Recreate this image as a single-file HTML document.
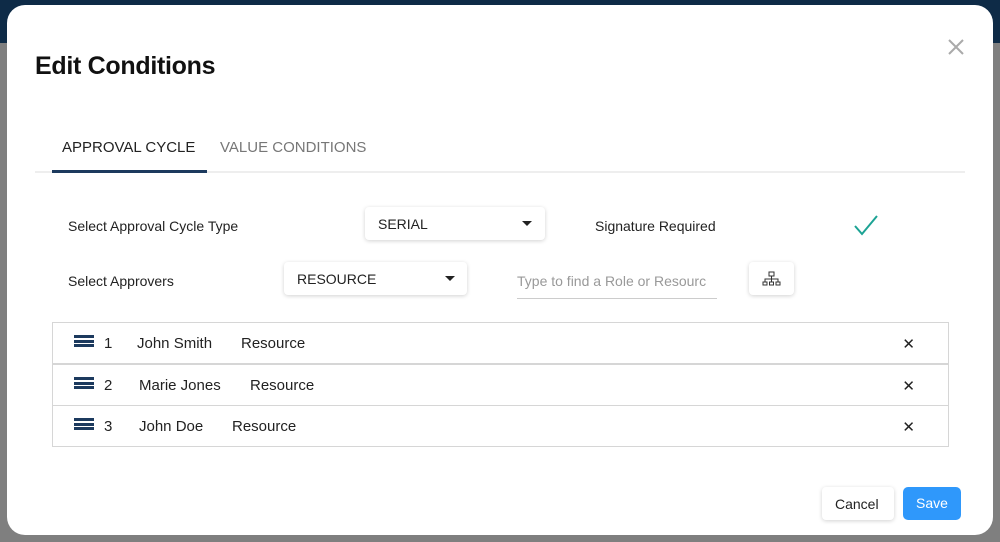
<!DOCTYPE html>
<html><head><style>
body{margin:0;width:1000px;height:542px;overflow:hidden;background:#7f7f7f;font-family:"Liberation Sans",sans-serif;position:relative}
.top{position:absolute;left:0;top:0;width:1000px;height:43px;background:#0e2b47}
.modal{position:absolute;left:7px;top:5px;width:986px;height:530px;background:#fff;border-radius:18px}
.a{position:absolute;white-space:nowrap}
h1{position:absolute;left:28px;top:47px;margin:0;font-size:25px;font-weight:bold;color:#111;letter-spacing:-0.3px}
.tab{font-size:15px}
.sel{position:absolute;background:#fff;border-radius:4px;box-shadow:0 1px 4px rgba(0,0,0,.18);font-size:14px;color:#222}
.sel span{position:absolute;left:13px;top:9px}
.caret{position:absolute;width:0;height:0;border-left:5px solid transparent;border-right:5px solid transparent;border-top:5px solid #222;top:14px}
.row{position:absolute;left:45px;width:895px;height:40px;border:1px solid #d6d6d6;font-size:15px;color:#222}
.row div{position:absolute;top:12px}
.ham{position:absolute;left:21px;top:14px;width:20px;height:12px}
.ham i{display:block;height:3px;background:#1c3a5e;margin-bottom:1.5px}
.x{right:33px}
</style></head><body>
<div class="top"></div>
<div class="modal">
<h1>Edit Conditions</h1>
<svg class="a" style="left:941px;top:34px" width="16" height="16" viewBox="0 0 16 16"><path d="M1 1L15 15M15 1L1 15" stroke="#aaa" stroke-width="2"/></svg>
<div class="a tab" style="left:55px;top:134px;color:#222">APPROVAL CYCLE</div>
<div class="a tab" style="left:213px;top:134px;color:#777">VALUE CONDITIONS</div>
<div class="a" style="left:28px;top:166px;width:930px;height:2px;background:#eee"></div>
<div class="a" style="left:45px;top:165px;width:155px;height:3px;background:#1c3a5e"></div>
<div class="a" style="left:61px;top:213px;font-size:14px;color:#222">Select Approval Cycle Type</div>
<div class="sel" style="left:358px;top:202px;width:180px;height:33px"><span>SERIAL</span><div class="caret" style="left:157px"></div></div>
<div class="a" style="left:588px;top:213px;font-size:14px;color:#222">Signature Required</div>
<svg class="a" style="left:846px;top:209px" width="26" height="22" viewBox="0 0 26 22"><path d="M2 12 L9 20 L24 2" fill="none" stroke="#1ca394" stroke-width="2"/></svg>
<div class="a" style="left:61px;top:268px;font-size:14px;color:#222">Select Approvers</div>
<div class="sel" style="left:277px;top:257px;width:183px;height:33px"><span>RESOURCE</span><div class="caret" style="left:161px"></div></div>
<div class="a" style="left:510px;top:268px;font-size:14px;color:#999">Type to find a Role or Resourc</div>
<div class="a" style="left:510px;top:293px;width:200px;height:1px;background:#ccc"></div>
<div class="sel" style="left:742px;top:257px;width:45px;height:33px">
<svg style="position:absolute;left:13px;top:9px" width="19" height="15" viewBox="0 0 19 15" fill="none" stroke="#333" stroke-width="1"><rect x="7" y="1" width="5" height="4"/><path d="M9.5 5v3M3 11V8h13v3M9.5 8v3"/><rect x="1" y="11" width="4" height="3"/><rect x="7.5" y="11" width="4" height="3"/><rect x="14" y="11" width="4" height="3"/></svg></div>
<div class="row" style="top:317px"><div class="ham"><i></i><i></i><i></i></div><div style="left:51px">1</div><div style="left:84px">John Smith</div><div style="left:188px">Resource</div><div class="x">✕</div></div>
<div class="row" style="top:359px"><div class="ham"><i></i><i></i><i></i></div><div style="left:51px">2</div><div style="left:86px">Marie Jones</div><div style="left:197px">Resource</div><div class="x">✕</div></div>
<div class="row" style="top:400px"><div class="ham"><i></i><i></i><i></i></div><div style="left:51px">3</div><div style="left:86px">John Doe</div><div style="left:179px">Resource</div><div class="x">✕</div></div>
<div class="sel" style="left:815px;top:482px;width:72px;height:33px"><span style="left:13px;top:9px">Cancel</span></div>
<div class="a" style="left:896px;top:482px;width:58px;height:33px;background:#2f98fb;border-radius:5px;color:#fff;font-size:14px;text-align:center;line-height:33px">Save</div>
</div>
</body></html>
